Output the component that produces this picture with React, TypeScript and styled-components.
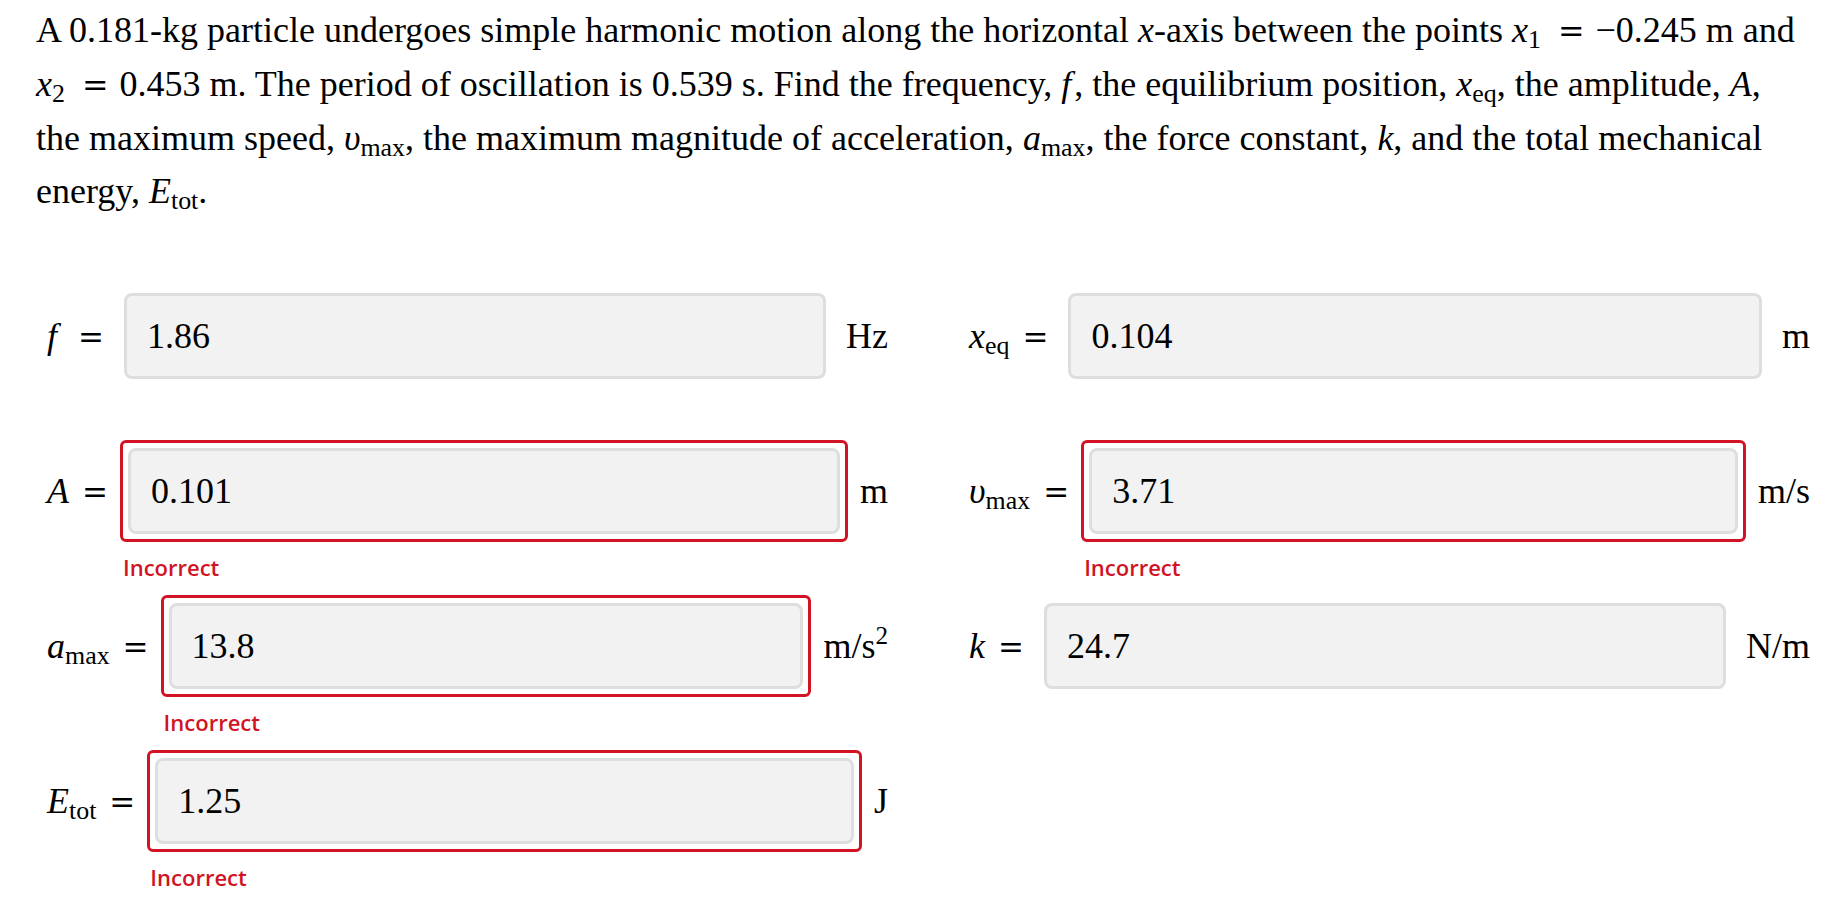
import React from "react";
import styled, { createGlobalStyle } from "styled-components";

const RED = "#d11324";

const GlobalStyle = createGlobalStyle`
  html, body { margin: 0; padding: 0; background: #ffffff; }
  body {
    font-family: "Liberation Serif", "Times New Roman", serif;
    color: #000000;
  }
`;

const Page = styled.main`
  padding: 4px 19px 40px 36px;
`;

const Question = styled.p`
  margin: 0;
  font-size: 36px;
  line-height: 53px;
`;

const V = styled.i<{ $ic?: number }>`
  font-style: italic;
  font-weight: 400;
  margin-right: ${(p) => p.$ic ?? 0}px;
`;

const Sub = styled.sub`
  font-style: normal;
  font-weight: 400;
  font-size: 0.72em;
  vertical-align: -0.22em;
  line-height: 0;
`;

const Sup = styled.sup`
  font-size: 0.7em;
  vertical-align: 0.55em;
  line-height: 0;
`;

const Op = styled.span`
  font-family: "DejaVu Serif", serif;
  font-size: 0.88em;
  margin: 0 11px 0 17px;
`;

const Answers = styled.section`
  display: grid;
  grid-template-columns: 1fr 1fr;
  column-gap: 81px;
  margin: 67px 0 0 11px;
`;

const Field = styled.div`
  display: grid;
  grid-template-columns: auto 1fr auto;
  align-items: baseline;
  margin-bottom: 13px;
`;

const Label = styled.span`
  font-size: 36px;
  white-space: nowrap;
`;

const Eq = styled.span`
  font-family: "DejaVu Serif", serif;
  font-size: 31px;
  margin-left: 13px;
`;

const Wrap = styled.div<{ $bad: boolean }>`
  margin: 0 12px;
  padding: 5px;
  border: 3px solid ${(p) => (p.$bad ? RED : "transparent")};
  border-radius: 6px;
`;

const Box = styled.input`
  display: block;
  width: 100%;
  box-sizing: border-box;
  height: 86px;
  border: 3px solid #dedede;
  border-radius: 8px;
  background: #f2f2f2;
  padding: 0 20px;
  font: 36px "Liberation Serif", "Times New Roman", serif;
  color: #000000;
  outline: none;
`;

const Unit = styled.span`
  font-size: 36px;
  white-space: nowrap;
`;

const Msg = styled.div`
  grid-column: 2;
  margin: 10px 12px 0;
  padding-left: 3px;
  height: 30px;
  font: 600 22px/30px "Open Sans", sans-serif;
  color: ${RED};
`;

type FieldProps = {
  label: React.ReactNode;
  value: string;
  unit: React.ReactNode;
  bad?: boolean;
};

function AnswerField({ label, value, unit, bad = false }: FieldProps) {
  return (
    <Field>
      <Label>
        {label}
        <Eq>=</Eq>
      </Label>
      <Wrap $bad={bad}>
        <Box readOnly defaultValue={value} />
      </Wrap>
      <Unit>{unit}</Unit>
      <Msg>{bad ? "Incorrect" : ""}</Msg>
    </Field>
  );
}

export default function App() {
  return (
    <>
      <GlobalStyle />
      <Page>
        <Question>
          A 0.181-kg particle undergoes simple harmonic motion along the horizontal <V>x</V>-axis
          between the points <V>x</V>
          <Sub>1</Sub>
          <Op>=</Op>−0.245 m and <V>x</V>
          <Sub>2</Sub>
          <Op>=</Op>0.453 m. The period of oscillation is 0.539 s. Find the frequency, <V $ic={3}>f</V>,
          the equilibrium position, <V>x</V>
          <Sub>eq</Sub>, the amplitude, <V>A</V>, the maximum speed, <V>υ</V>
          <Sub>max</Sub>, the maximum magnitude of acceleration, <V>a</V>
          <Sub>max</Sub>, the force constant, <V>k</V>, and the total mechanical energy,{" "}
          <V>E</V>
          <Sub>tot</Sub>.
        </Question>
        <Answers>
          <AnswerField label={<V $ic={8}>f</V>} value="1.86" unit="Hz" />
          <AnswerField
            label={
              <>
                <V>x</V>
                <Sub>eq</Sub>
              </>
            }
            value="0.104"
            unit="m"
          />
          <AnswerField label={<V>A</V>} value="0.101" unit="m" bad />
          <AnswerField
            label={
              <>
                <V>υ</V>
                <Sub>max</Sub>
              </>
            }
            value="3.71"
            unit="m/s"
            bad
          />
          <AnswerField
            label={
              <>
                <V>a</V>
                <Sub>max</Sub>
              </>
            }
            value="13.8"
            unit={
              <>
                m/s<Sup>2</Sup>
              </>
            }
            bad
          />
          <AnswerField label={<V>k</V>} value="24.7" unit="N/m" />
          <AnswerField
            label={
              <>
                <V>E</V>
                <Sub>tot</Sub>
              </>
            }
            value="1.25"
            unit="J"
            bad
          />
        </Answers>
      </Page>
    </>
  );
}
